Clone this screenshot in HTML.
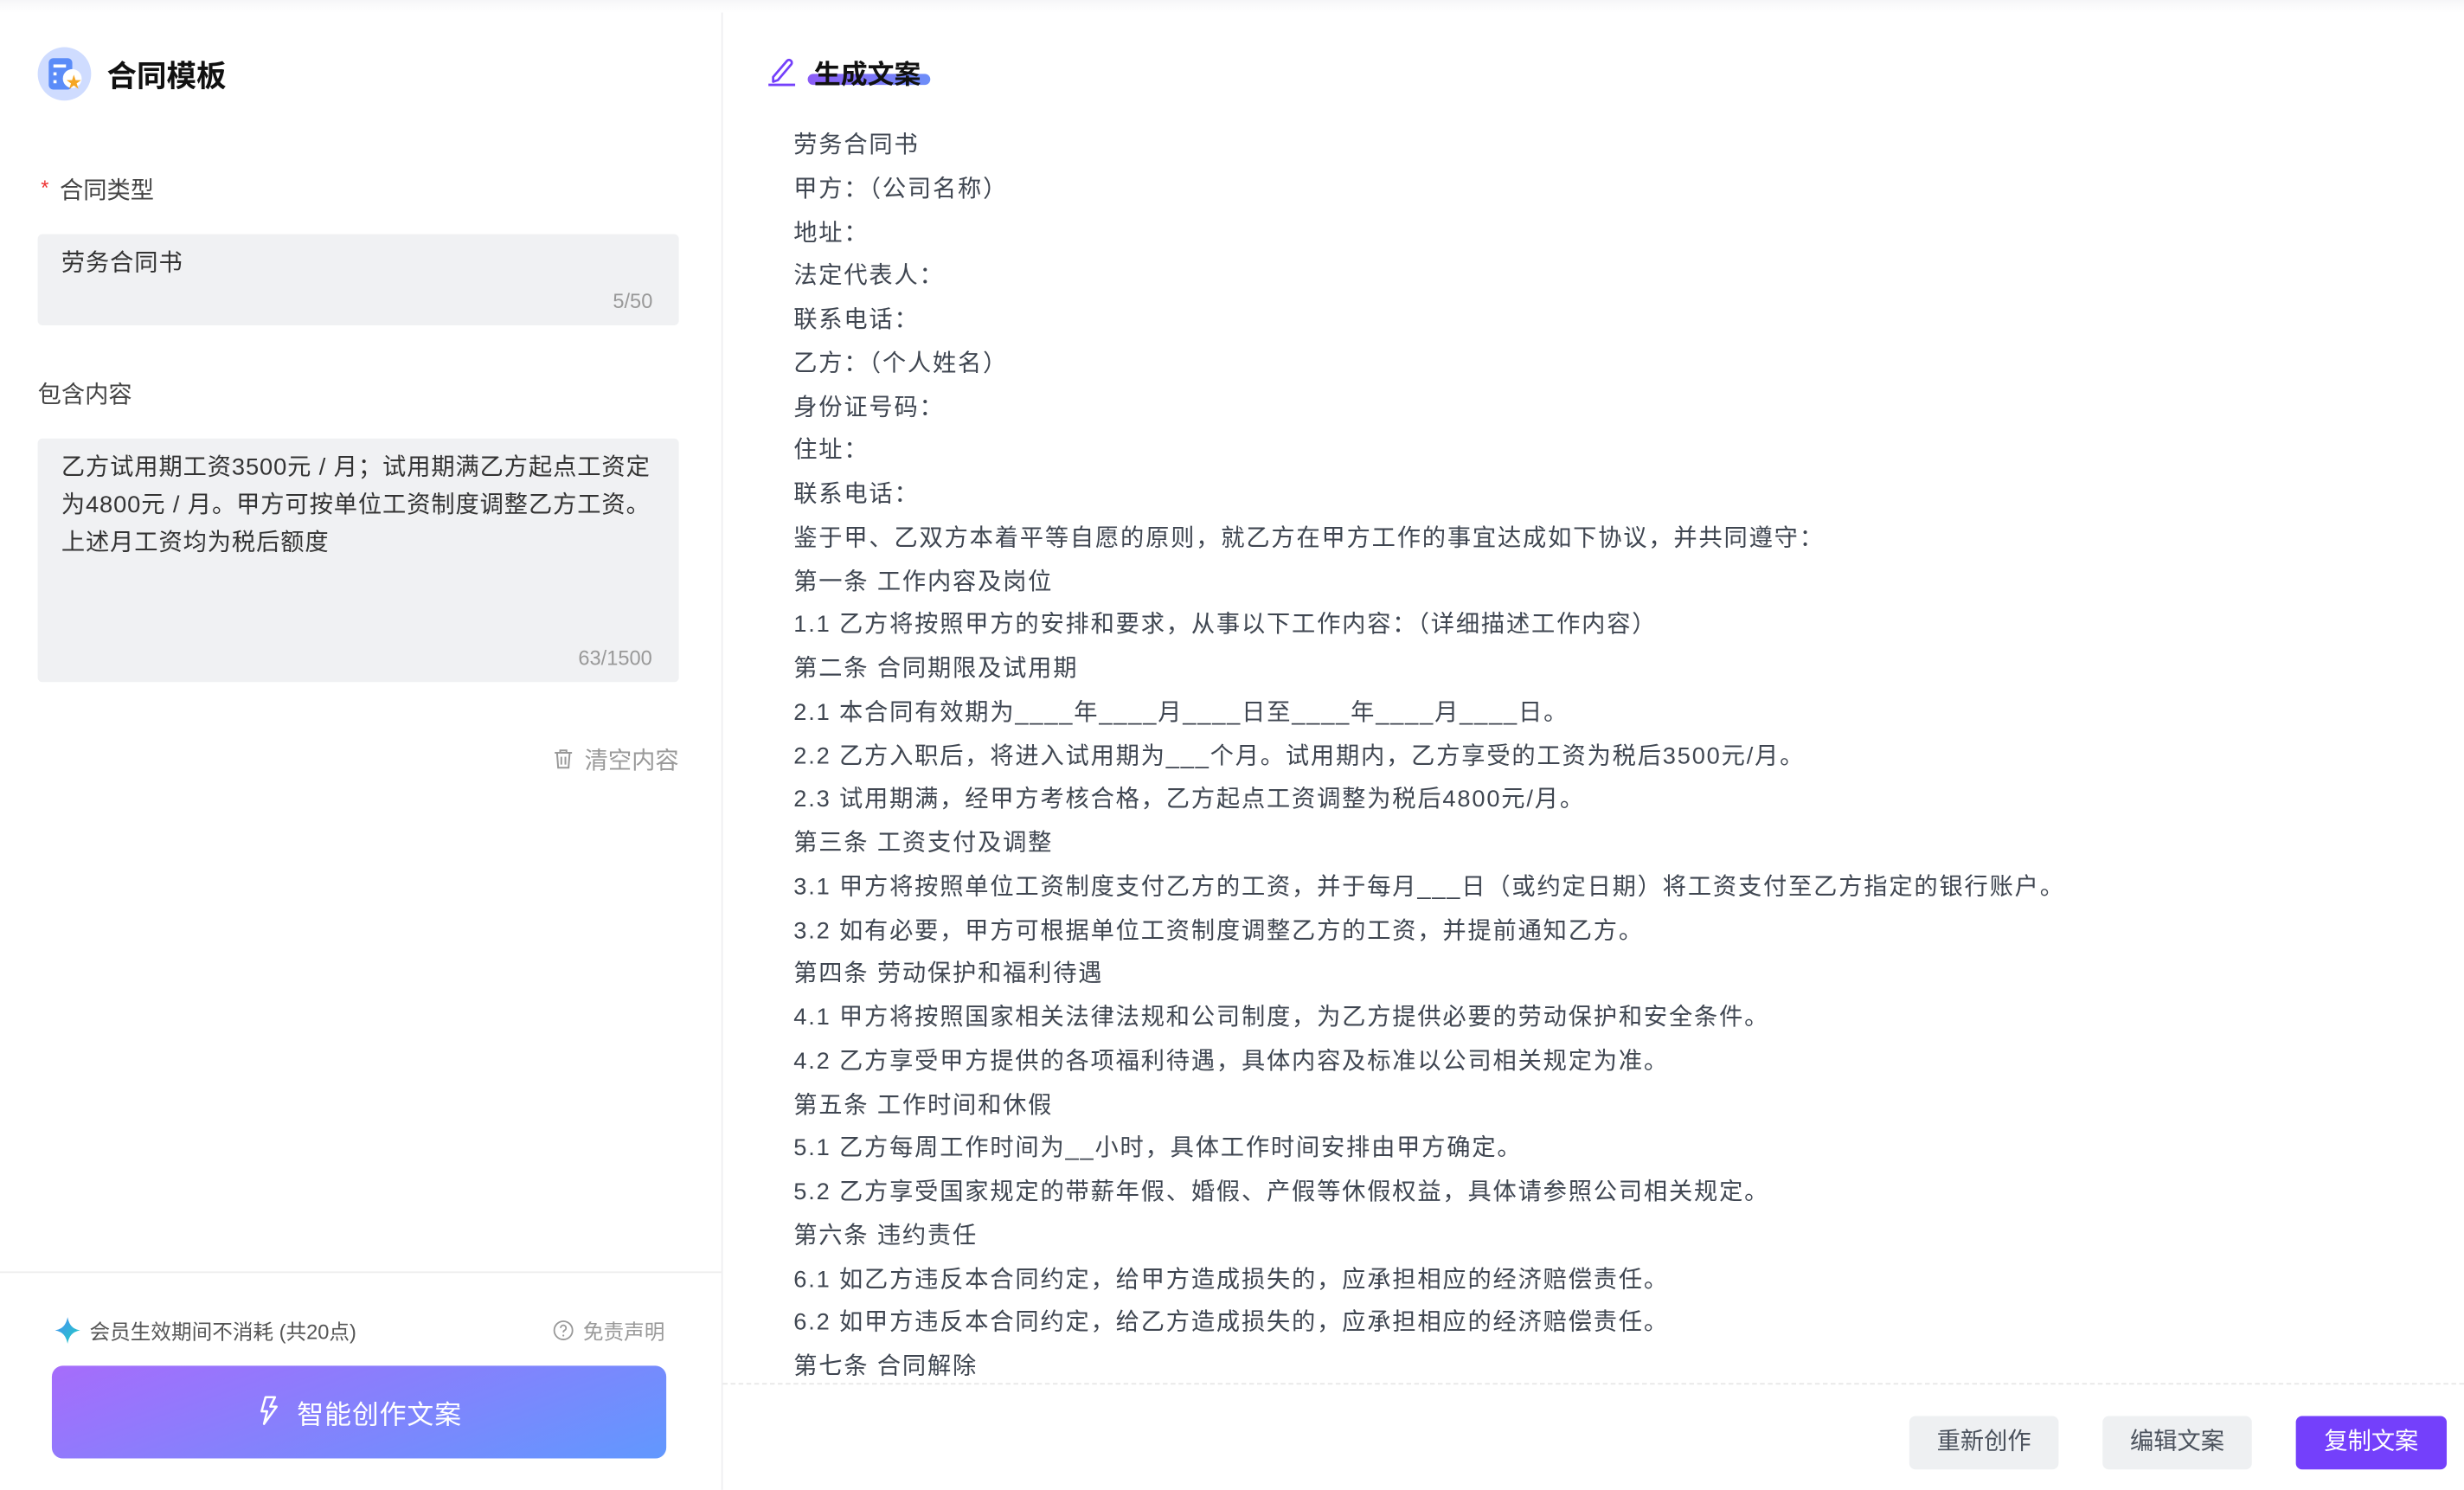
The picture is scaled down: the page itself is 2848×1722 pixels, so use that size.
<!DOCTYPE html>
<html><head><meta charset="utf-8"><style>
html,body{margin:0;padding:0;width:2848px;height:1722px;overflow:hidden;background:#fff}
#s{position:absolute;left:0;top:0;width:1568px;height:948px;transform:scale(1.81633);transform-origin:0 0;font-family:"Liberation Sans","Noto Sans CJK SC",sans-serif;color:#333}
.a{position:absolute;white-space:nowrap}
.line{position:absolute;left:505px;font-size:15px;color:#3f4651;line-height:20px;letter-spacing:1px;margin-top:2px}
.btn{position:absolute;top:901px;width:95px;height:34px;border-radius:4px;background:#eef0f2;color:#4a515c;font-size:15px;text-align:center;line-height:34px}
</style></head><body><div id="s">
<div class="a" style="left:459px;top:0;width:1px;height:948px;background:#eeeef0"></div>
<div class="a" style="left:0;top:0;width:1568px;height:8px;background:linear-gradient(#f6f6f8,#fff)"></div>
<!-- left -->
<div class="a" style="left:24px;top:30px;width:34px;height:34px;border-radius:50%;background:#cfdcff"></div>
<div class="a" style="left:31px;top:37px;width:15px;height:20px;border-radius:3px;background:#5b8cf8"></div>
<div class="a" style="left:34px;top:41px;width:8px;height:2px;background:#fff"></div>
<div class="a" style="left:34px;top:46px;width:2px;height:2px;background:#fff"></div>
<div class="a" style="left:34px;top:51px;width:2px;height:2px;background:#fff"></div>
<div class="a" style="left:40px;top:44px;width:12px;height:12px;border-radius:50%;background:#fff"></div>
<div class="a" style="left:42px;top:44px;font-size:10px;color:#f5a623">★</div>
<div class="a" style="left:68px;top:34px;font-size:19px;font-weight:bold;color:#111">合同模板</div>
<div class="a" style="left:26px;top:112px;font-size:13px;color:#e33">*</div>
<div class="a" style="left:38px;top:110px;font-size:15px;color:#444">合同类型</div>
<div class="a" style="left:24px;top:149px;width:408px;height:58px;background:#f0f1f3;border-radius:3px"></div>
<div class="a" style="left:39px;top:156px;font-size:15px;color:#333;letter-spacing:.5px">劳务合同书</div>
<div class="a" style="left:390px;top:184px;font-size:13px;color:#999">5/50</div>
<div class="a" style="left:24px;top:240px;font-size:15px;color:#444">包含内容</div>
<div class="a" style="left:24px;top:279px;width:408px;height:155px;background:#f0f1f3;border-radius:3px"></div>
<div class="a" style="left:39px;top:286px;font-size:15px;color:#333;line-height:24px;letter-spacing:.5px">乙方试用期工资3500元 / 月；试用期满乙方起点工资定<br>为4800元 / 月。甲方可按单位工资制度调整乙方工资。<br>上述月工资均为税后额度</div>
<div class="a" style="left:368px;top:411px;font-size:13px;color:#999">63/1500</div>
<svg class="a" style="left:352px;top:476px" width="13" height="14" viewBox="0 0 13 14"><path d="M1 3h11M4.5 3V1.5h4V3M2.5 3l.7 9.5h6.6L10.5 3M5.2 5.5v5M7.8 5.5v5" fill="none" stroke="#999" stroke-width="1.1"/></svg>
<div class="a" style="left:372px;top:473px;font-size:15px;color:#999">清空内容</div>
<div class="a" style="left:0;top:809px;width:459px;height:1px;background:#eeeeee"></div>
<svg class="a" style="left:35px;top:838px" width="16" height="17" viewBox="0 0 16 17"><defs><linearGradient id="g1" x1="0" y1="0" x2="1" y2="1"><stop offset="0" stop-color="#4a8cf7"/><stop offset="1" stop-color="#1fd1c1"/></linearGradient></defs><path d="M8 0C9 5 11 7.5 16 8.5C11 9.5 9 12 8 17C7 12 5 9.5 0 8.5C5 7.5 7 5 8 0Z" fill="url(#g1)"/></svg>
<div class="a" style="left:57px;top:837px;font-size:13px;color:#555">会员生效期间不消耗 (共20点)</div>
<svg class="a" style="left:352px;top:840px" width="13" height="13" viewBox="0 0 13 13"><circle cx="6.5" cy="6.5" r="5.8" fill="none" stroke="#999" stroke-width="1"/><path d="M4.8 5a1.7 1.7 0 1 1 2.4 1.5c-.6.3-.7.7-.7 1.3" fill="none" stroke="#999" stroke-width="1"/><circle cx="6.5" cy="9.8" r=".6" fill="#999"/></svg>
<div class="a" style="left:371px;top:837px;font-size:13px;color:#999">免责声明</div>
<div class="a" style="left:33px;top:869px;width:391px;height:59px;border-radius:7px;background:linear-gradient(160deg,#a66cfb,#6198fe)"></div>
<svg class="a" style="left:164px;top:888px" width="14" height="19" viewBox="0 0 14 19"><path d="M5 1h6L8 7h4L4 18l2-8H2.5Z" fill="none" stroke="#fff" stroke-width="1.4" stroke-linejoin="round"/></svg>
<div class="a" style="left:189px;top:886px;font-size:17px;color:#fff;letter-spacing:.5px">智能创作文案</div>
<!-- right -->
<svg class="a" style="left:488px;top:35px" width="20" height="20" viewBox="0 0 20 20"><path d="M4 14L13 3.5a1.8 1.8 0 0 1 2.6 2.4L7 16l-3 1Z" fill="none" stroke="#7440fb" stroke-width="1.5" stroke-linejoin="round"/><path d="M1 19h17" stroke="#7440fb" stroke-width="1.6"/></svg>
<div class="a" style="left:514px;top:47px;width:78px;height:7px;border-radius:4px;background:linear-gradient(90deg,#8b5cf6,#6d8ef8)"></div>
<div class="a" style="left:518px;top:33px;font-size:17px;font-weight:bold;color:#111">生成文案</div>
<div class="line" style="top:81px">劳务合同书</div>
<div class="line" style="top:109px">甲方：（公司名称）</div>
<div class="line" style="top:137px">地址：</div>
<div class="line" style="top:164px">法定代表人：</div>
<div class="line" style="top:192px">联系电话：</div>
<div class="line" style="top:220px">乙方：（个人姓名）</div>
<div class="line" style="top:248px">身份证号码：</div>
<div class="line" style="top:275px">住址：</div>
<div class="line" style="top:303px">联系电话：</div>
<div class="line" style="top:331px">鉴于甲、乙双方本着平等自愿的原则，就乙方在甲方工作的事宜达成如下协议，并共同遵守：</div>
<div class="line" style="top:359px">第一条 工作内容及岗位</div>
<div class="line" style="top:386px">1.1 乙方将按照甲方的安排和要求，从事以下工作内容：（详细描述工作内容）</div>
<div class="line" style="top:414px">第二条 合同期限及试用期</div>
<div class="line" style="top:442px">2.1 本合同有效期为____年____月____日至____年____月____日。</div>
<div class="line" style="top:470px">2.2 乙方入职后，将进入试用期为___个月。试用期内，乙方享受的工资为税后3500元/月。</div>
<div class="line" style="top:497px">2.3 试用期满，经甲方考核合格，乙方起点工资调整为税后4800元/月。</div>
<div class="line" style="top:525px">第三条 工资支付及调整</div>
<div class="line" style="top:553px">3.1 甲方将按照单位工资制度支付乙方的工资，并于每月___日（或约定日期）将工资支付至乙方指定的银行账户。</div>
<div class="line" style="top:581px">3.2 如有必要，甲方可根据单位工资制度调整乙方的工资，并提前通知乙方。</div>
<div class="line" style="top:608px">第四条 劳动保护和福利待遇</div>
<div class="line" style="top:636px">4.1 甲方将按照国家相关法律法规和公司制度，为乙方提供必要的劳动保护和安全条件。</div>
<div class="line" style="top:664px">4.2 乙方享受甲方提供的各项福利待遇，具体内容及标准以公司相关规定为准。</div>
<div class="line" style="top:692px">第五条 工作时间和休假</div>
<div class="line" style="top:719px">5.1 乙方每周工作时间为__小时，具体工作时间安排由甲方确定。</div>
<div class="line" style="top:747px">5.2 乙方享受国家规定的带薪年假、婚假、产假等休假权益，具体请参照公司相关规定。</div>
<div class="line" style="top:775px">第六条 违约责任</div>
<div class="line" style="top:803px">6.1 如乙方违反本合同约定，给甲方造成损失的，应承担相应的经济赔偿责任。</div>
<div class="line" style="top:830px">6.2 如甲方违反本合同约定，给乙方造成损失的，应承担相应的经济赔偿责任。</div>
<div class="line" style="top:858px">第七条 合同解除</div>
<div class="a" style="left:460px;top:880px;width:1108px;height:68px;background:#fff"></div>
<div class="a" style="left:460px;top:880px;width:1108px;height:0;border-top:1px dashed #e6e6e6"></div>
<div class="btn" style="left:1215px">重新创作</div>
<div class="btn" style="left:1338px">编辑文案</div>
<div class="btn" style="left:1461px;width:96px;background:#7440fb;color:#fff">复制文案</div>
</div></body></html>
